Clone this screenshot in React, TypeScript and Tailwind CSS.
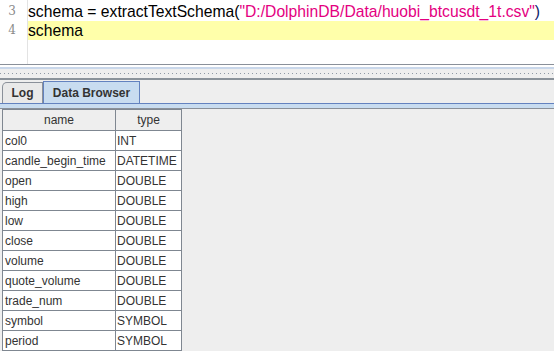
import React from "react";

const rows: [string, string][] = [
  ["col0", "INT"],
  ["candle_begin_time", "DATETIME"],
  ["open", "DOUBLE"],
  ["high", "DOUBLE"],
  ["low", "DOUBLE"],
  ["close", "DOUBLE"],
  ["volume", "DOUBLE"],
  ["quote_volume", "DOUBLE"],
  ["trade_num", "DOUBLE"],
  ["symbol", "SYMBOL"],
  ["period", "SYMBOL"],
];

export default function App() {
  return (
    <div
      className="w-[554px] h-[351px] overflow-hidden bg-[#eeeeee] flex flex-col"
      style={{ fontFamily: '"Liberation Sans", Arial, sans-serif' }}
    >
      {/* Editor */}
      <div className="h-[65px] shrink-0 bg-white flex border-b border-[#8a9099]">
        <div className="w-[28px] shrink-0 border-r border-[#e3e3e3] pt-[2px] text-[12px] text-[#8a8a8a] text-right pr-[11px]"
          style={{ fontFamily: '"DejaVu Serif", "Liberation Serif", serif' }}>
          <div className="h-[19px] leading-[19px]">3</div>
          <div className="h-[19px] leading-[19px]">4</div>
        </div>
        <div className="flex-1 pt-[2px] text-[15.7px] text-black">
          <div className="h-[19px] leading-[19px] whitespace-nowrap">
            schema = extractTextSchema(
            <span className="text-[#e4007f]">"D:/DolphinDB/Data/huobi_btcusdt_1t.csv"</span>
            <span className="text-[#0a1a6a]">)</span>
          </div>
          <div className="h-[19px] leading-[19px] bg-[#ffffaa] whitespace-nowrap">schema</div>
        </div>
      </div>

      {/* Split divider */}
      <div className="h-[2px] shrink-0 bg-white" />
      <div className="h-[2px] shrink-0 bg-[#c9d7ea]" />
      <div className="h-[9px] shrink-0 flex flex-col justify-center">
        <div className="h-[1px] bg-[repeating-linear-gradient(90deg,#8f99a5_0px,#8f99a5_1px,transparent_1px,transparent_4px)]" />
      </div>
      <div className="h-[2px] shrink-0 bg-[#8a929a]" />

      {/* Tabs */}
      <div className="h-[22px] shrink-0 mt-[1px] flex items-end pl-[2px]">
        <div className="h-[21px] w-[41px] bg-[#e9e9e9] border border-b-0 border-[#8a9099] rounded-tl-[5px] flex items-center justify-center text-[12px] font-bold text-[#333333]">
          Log
        </div>
        <div className="h-[22px] w-[97px] bg-[#c8dcf0] border border-b-0 border-[#6382bf] flex items-center justify-center text-[12px] font-bold text-[#333333]">
          Data Browser
        </div>
      </div>
      <div className="h-[1px] shrink-0 bg-[#6382bf]" />
      <div className="h-[4px] shrink-0 bg-[#c8dcf0]" />
      <div className="h-[1px] shrink-0 bg-[#8a9099]" />

      {/* Table */}
      <div className="ml-[2px] w-[180px] border-l border-t border-[#7f8791] text-[12px] text-[#333333]">
        <div className="flex h-[21px] border-b border-[#7f8791] bg-[#eeeeee]">
          <div className="w-[113px] border-r border-[#7f8791] flex items-center justify-center">name</div>
          <div className="w-[66px] border-r border-[#7f8791] flex items-center justify-center">type</div>
        </div>
        {rows.map(([n, t]) => (
          <div key={n} className="flex h-[20px] border-b border-[#7f8791] bg-white">
            <div className="w-[113px] border-r border-[#7f8791] flex items-center pl-[2px] whitespace-nowrap">{n}</div>
            <div className="w-[66px] border-r border-[#7f8791] flex items-center pl-[1px] whitespace-nowrap">{t}</div>
          </div>
        ))}
      </div>
    </div>
  );
}
